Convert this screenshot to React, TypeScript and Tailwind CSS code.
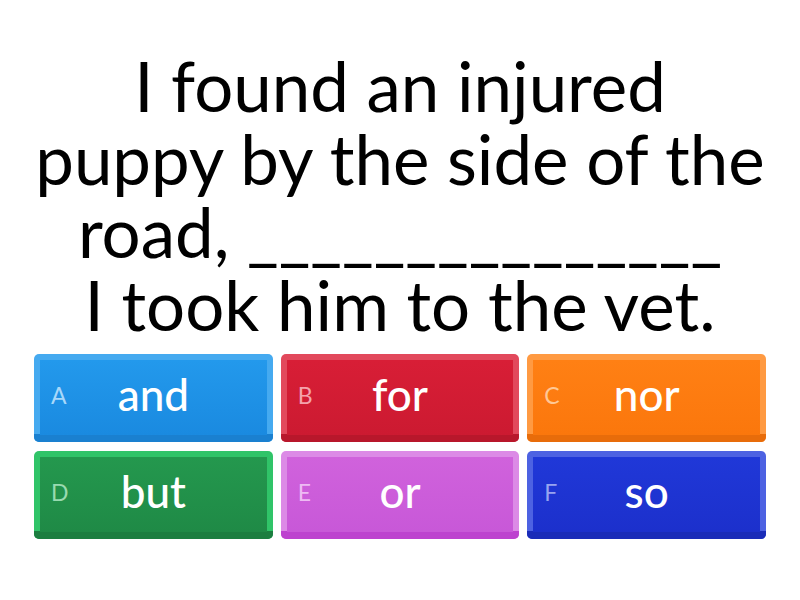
const options = [
  { letter: 'A', word: 'and', outer: 'bg-[#45aaf0]', face: 'from-[#2399ec] to-[#1a8ae0]', bottom: 'bg-[#1a80d0]', label: 'text-[#a8d8fa]' },
  { letter: 'B', word: 'for', outer: 'bg-[#e2495c]', face: 'from-[#d81e36] to-[#cc1a31]', bottom: 'bg-[#b8172b]', label: 'text-[#f4a2ac]' },
  { letter: 'C', word: 'nor', outer: 'bg-[#ff9a42]', face: 'from-[#ff8014] to-[#fb770c]', bottom: 'bg-[#e86c0a]', label: 'text-[#ffc895]' },
  { letter: 'D', word: 'but', outer: 'bg-[#30c468]', face: 'from-[#24984e] to-[#1f8a46]', bottom: 'bg-[#1c7e40]', label: 'text-[#98dab0]' },
  { letter: 'E', word: 'or', outer: 'bg-[#dc8ae6]', face: 'from-[#d062dc] to-[#c858d8]', bottom: 'bg-[#bd42cf]', label: 'text-[#eebaf3]' },
  { letter: 'F', word: 'so', outer: 'bg-[#4d62e2]', face: 'from-[#2038d8] to-[#1c30cc]', bottom: 'bg-[#1a2cb8]', label: 'text-[#98a4f0]' },
];

function Choice({ o }: { o: (typeof options)[number] }) {
  return (
    <div className={`relative h-[88px] rounded-[5px] ${o.outer} overflow-hidden`}>
      <div className={`absolute left-0 right-0 bottom-0 h-[8px] ${o.bottom}`} />
      <div className={`absolute left-[6px] right-[6px] top-[6px] bottom-[7px] bg-gradient-to-b ${o.face} flex items-center justify-center`}>
        <span className={`absolute left-[11px] text-[23px] leading-none pb-[4px] ${o.label}`}>{o.letter}</span>
        <span className="text-white text-[44px] font-medium leading-none pb-[7px]">{o.word}</span>
      </div>
    </div>
  );
}

export default function App() {
  return (
    <div className="w-[800px] h-[600px] bg-white" style={{ fontFamily: 'Lato, "Noto Sans", sans-serif' }}>
      <div className="pt-[49px] px-[10px] text-center text-black text-[69px] leading-[73px] whitespace-nowrap">
        <p>I found an injured</p>
        <p>puppy by the side of the</p>
        <p>road, _______________</p>
        <p>I took him to the vet.</p>
      </div>
      <div className="grid grid-cols-3 gap-x-[8px] gap-y-[9px] px-[34px] mt-[13px]">
        {options.map((o) => (
          <Choice key={o.letter} o={o} />
        ))}
      </div>
    </div>
  );
}
